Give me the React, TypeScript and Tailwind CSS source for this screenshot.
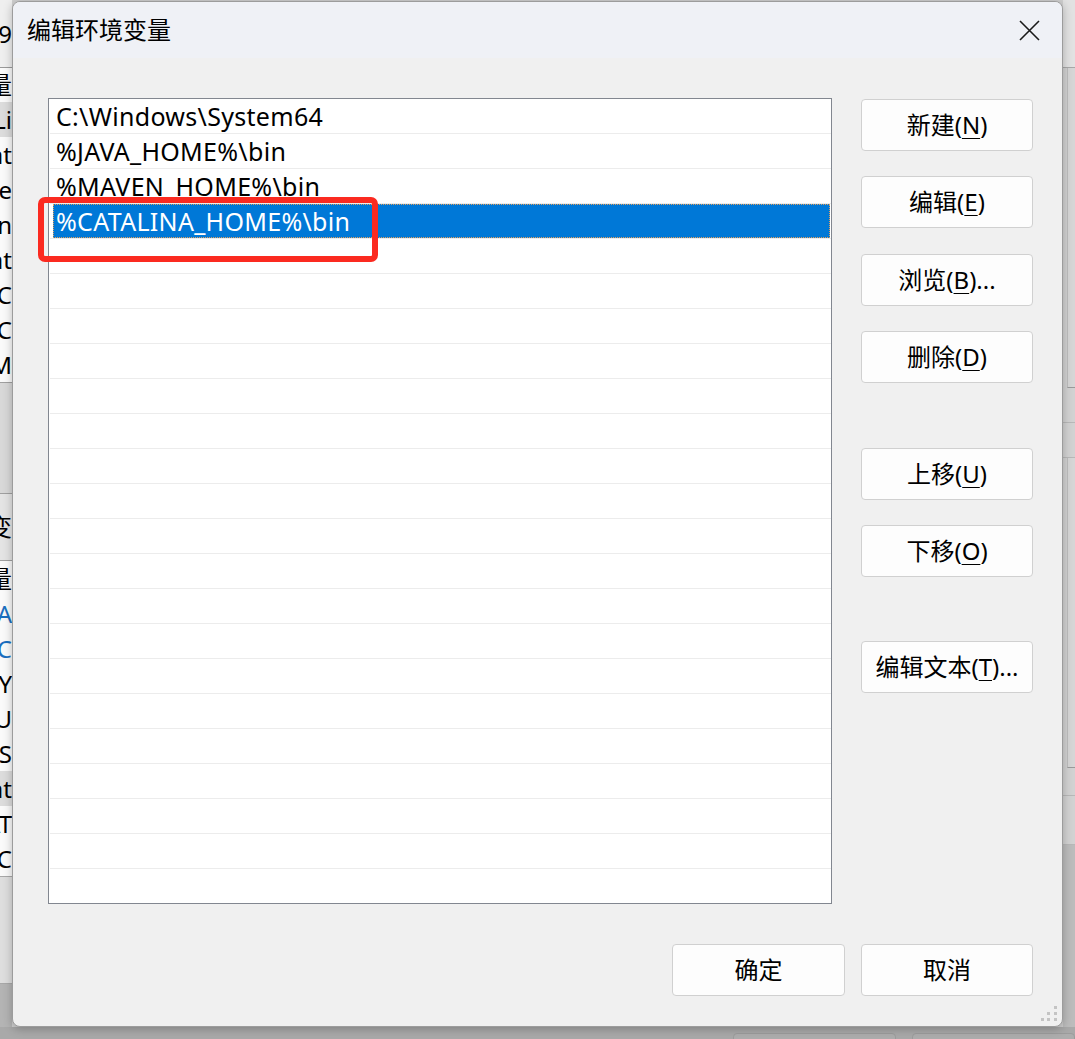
import React from 'react'

const items = ['C:\\Windows\\System64', '%JAVA_HOME%\\bin', '%MAVEN_HOME%\\bin', '%CATALINA_HOME%\\bin']
const SELECTED = 3

// left edge of the window behind the dialog (only ~12px shows)
const leftRows: { text: string; cls: string }[] = [
  { text: '变量', cls: 'h-[34px] bg-[#fafafa]' },
  { text: 'PATH_Li', cls: 'h-[35px] bg-[#dcdcdc]' },
  { text: 'Dat', cls: 'h-[35px] bg-[#fafafa]' },
  { text: 'te', cls: 'h-[35px] bg-[#fafafa]' },
  { text: 'in', cls: 'h-[35px] bg-[#fafafa]' },
  { text: 'Dat', cls: 'h-[35px] bg-[#fafafa]' },
  { text: 'y/C', cls: 'h-[35px] bg-[#fafafa]' },
  { text: 'y/C', cls: 'h-[35px] bg-[#fafafa]' },
  { text: 'TEM', cls: 'h-[35px] bg-[#fafafa]' },
]

const leftRows2: { text: string; cls: string }[] = [
  { text: '变量', cls: 'h-[35px] bg-[#fafafa]' },
  { text: 'A', cls: 'h-[35px] bg-[#fafafa] text-[#1a6fc0]' },
  { text: 'IC', cls: 'h-[35px] bg-[#fafafa] text-[#1a6fc0]' },
  { text: 'Y', cls: 'h-[35px] bg-[#fafafa]' },
  { text: 'U', cls: 'h-[35px] bg-[#fafafa]' },
  { text: 'S', cls: 'h-[35px] bg-[#fafafa]' },
  { text: 'at', cls: 'h-[35px] bg-[#dcdcdc]' },
  { text: 'AT', cls: 'h-[35px] bg-[#fafafa]' },
  { text: 'RC', cls: 'h-[35px] bg-[#fafafa]' },
]

function StripRow({ text, cls }: { text: string; cls: string }) {
  return (
    <div className={`flex items-center justify-end overflow-hidden whitespace-nowrap ${cls}`}>
      <span>{text}</span>
    </div>
  )
}

function Btn({ children, className = '' }: { children: React.ReactNode; className?: string }) {
  return (
    <button
      className={`flex h-[52px] w-[172px] items-center justify-center rounded-[4px] border border-[#d0d0d0] bg-[#fdfdfd] text-[24px] leading-none text-black ${className}`}
    >
      {children}
    </button>
  )
}

function U({ children }: { children: React.ReactNode }) {
  return <span className="underline decoration-1 underline-offset-[4px]">{children}</span>
}

function ResizeGrip() {
  const dots = [
    [13, 0],
    [6, 6],
    [13, 6],
    [0, 12],
    [6, 12],
    [13, 12],
  ]
  return (
    <svg width="16" height="15" viewBox="0 0 16 15" className="absolute bottom-[5px] right-[5px]">
      {dots.map(([x, y], i) => (
        <rect key={i} x={x} y={y} width="3" height="3" fill="#c4c4c4" />
      ))}
    </svg>
  )
}

export default function App() {
  const rows = Array.from({ length: 23 }, (_, i) => items[i] ?? '')

  return (
    <div className="relative h-[1039px] w-[1075px] overflow-hidden bg-[#cfcfcf] font-['Noto_Sans','Noto_Sans_CJK_SC',sans-serif] text-[24px] text-black">
      {/* window behind the dialog */}
      <div className="absolute inset-0 flex">
        <div className="flex w-[12px] flex-col overflow-hidden">
          <div className="flex h-[68px] items-center justify-end overflow-hidden whitespace-nowrap border-b border-[#9a9a9a] bg-[#efefef]">
            <span>2019</span>
          </div>
          {leftRows.map((r, i) => (
            <StripRow key={i} {...r} />
          ))}
          <div className="h-[112px] border-y border-[#a0a0a0] bg-[#d8d8d8]" />
          <div className="flex h-[67px] items-center justify-end overflow-hidden whitespace-nowrap border-b border-[#a0a0a0] bg-[#e4e4e4]">
            <span>系统变</span>
          </div>
          {leftRows2.map((r, i) => (
            <StripRow key={i} {...r} />
          ))}
          <div className="h-[108px] border-y border-[#a8a8a8] bg-[#dedede]" />
          <div className="flex-1 bg-[#b4b4b4]" />
        </div>
        <div className="flex-1" />
        <div className="flex w-[12px] flex-col bg-[#d2d2d2]">
          <div className="h-[68px] border-b border-[#a8a8a8] bg-[#e2e2e2]" />
          <div className="ml-[4px] h-[320px] border-b border-[#9a9a9a] border-l border-l-[#bdbdbd] bg-[#d6d6d6]" />
          <div className="h-[35px] border-b border-[#b8b8b8]" />
          <div className="h-[35px] border-b border-[#b8b8b8]" />
          <div className="ml-[4px] h-[310px] border-b border-[#9a9a9a] border-l border-l-[#bdbdbd] bg-[#d6d6d6]" />
          <div className="h-[28px] border-b border-[#b8b8b8]" />
          <div className="h-[49px] border-b border-[#b8b8b8]" />
          <div className="flex-1 bg-[#bcbcbc]" />
        </div>
      </div>
      <div className="absolute bottom-0 left-0 right-0 flex h-[12px] bg-[#a9a9a9]">
        <div className="ml-[733px] mt-[6px] h-[20px] w-[172px] rounded-[4px] border border-[#9c9c9c] bg-[#adadad]" />
        <div className="ml-[16px] mt-[6px] h-[20px] w-[172px] rounded-[4px] border border-[#9c9c9c] bg-[#adadad]" />
      </div>

      {/* dialog */}
      <div className="absolute left-[12px] top-[1px] flex h-[1026px] w-[1051px] flex-col overflow-hidden rounded-[8px] border border-[#9c9c9c] bg-[#f0f0f0] shadow-[0_2px_10px_rgba(0,0,0,0.25)]">
        <div className="flex h-[56px] shrink-0 items-center justify-between bg-[#eff1f6] pl-[14px] pr-[22px]">
          <span className="text-[24px] leading-none">编辑环境变量</span>
          <svg width="21" height="21" viewBox="0 0 21 21">
            <path d="M1 1 L20 20 M20 1 L1 20" stroke="#1a1a1a" strokeWidth="1.6" fill="none" />
          </svg>
        </div>

        <div className="flex pl-[35px] pt-[40px]">
          <div className="h-[806px] w-[784px] overflow-hidden border border-[#828790] bg-white text-[25px]">
            {rows.map((text, i) => (
              <div key={i} className="ml-[1px] flex h-[35px] items-stretch border-b border-[#ececec]">
                {i === SELECTED ? (
                  <div className="ml-[3px] mr-[1px] flex flex-1 items-center bg-[#0078d7] pl-[3px] leading-none tracking-[0.3px] text-white outline-1 -outline-offset-1 outline-dotted outline-[#e0a060]">
                    {text}
                  </div>
                ) : (
                  <div className="flex flex-1 items-center pl-[6px] leading-none tracking-[0.3px]">{text}</div>
                )}
              </div>
            ))}
          </div>

          <div className="ml-[29px] flex flex-col pt-[1px]">
            <Btn>
              新建(<U>N</U>)
            </Btn>
            <Btn className="mt-[25px]">
              编辑(<U>E</U>)
            </Btn>
            <Btn className="mt-[26px]">
              浏览(<U>B</U>)...
            </Btn>
            <Btn className="mt-[25px]">
              删除(<U>D</U>)
            </Btn>
            <Btn className="mt-[65px]">
              上移(<U>U</U>)
            </Btn>
            <Btn className="mt-[25px]">
              下移(<U>O</U>)
            </Btn>
            <Btn className="mt-[64px]">
              编辑文本(<U>T</U>)...
            </Btn>
          </div>
        </div>

        <div className="flex justify-end gap-[16px] pr-[29px] pt-[40px]">
          <Btn className="w-[173px]">确定</Btn>
          <Btn>取消</Btn>
        </div>

        <ResizeGrip />

        {/* red annotation box */}
        <div className="absolute left-[25px] top-[195px] h-[65px] w-[340px] rounded-[7px] border-[6px] border-[#fb2a20]" />
      </div>
    </div>
  )
}
